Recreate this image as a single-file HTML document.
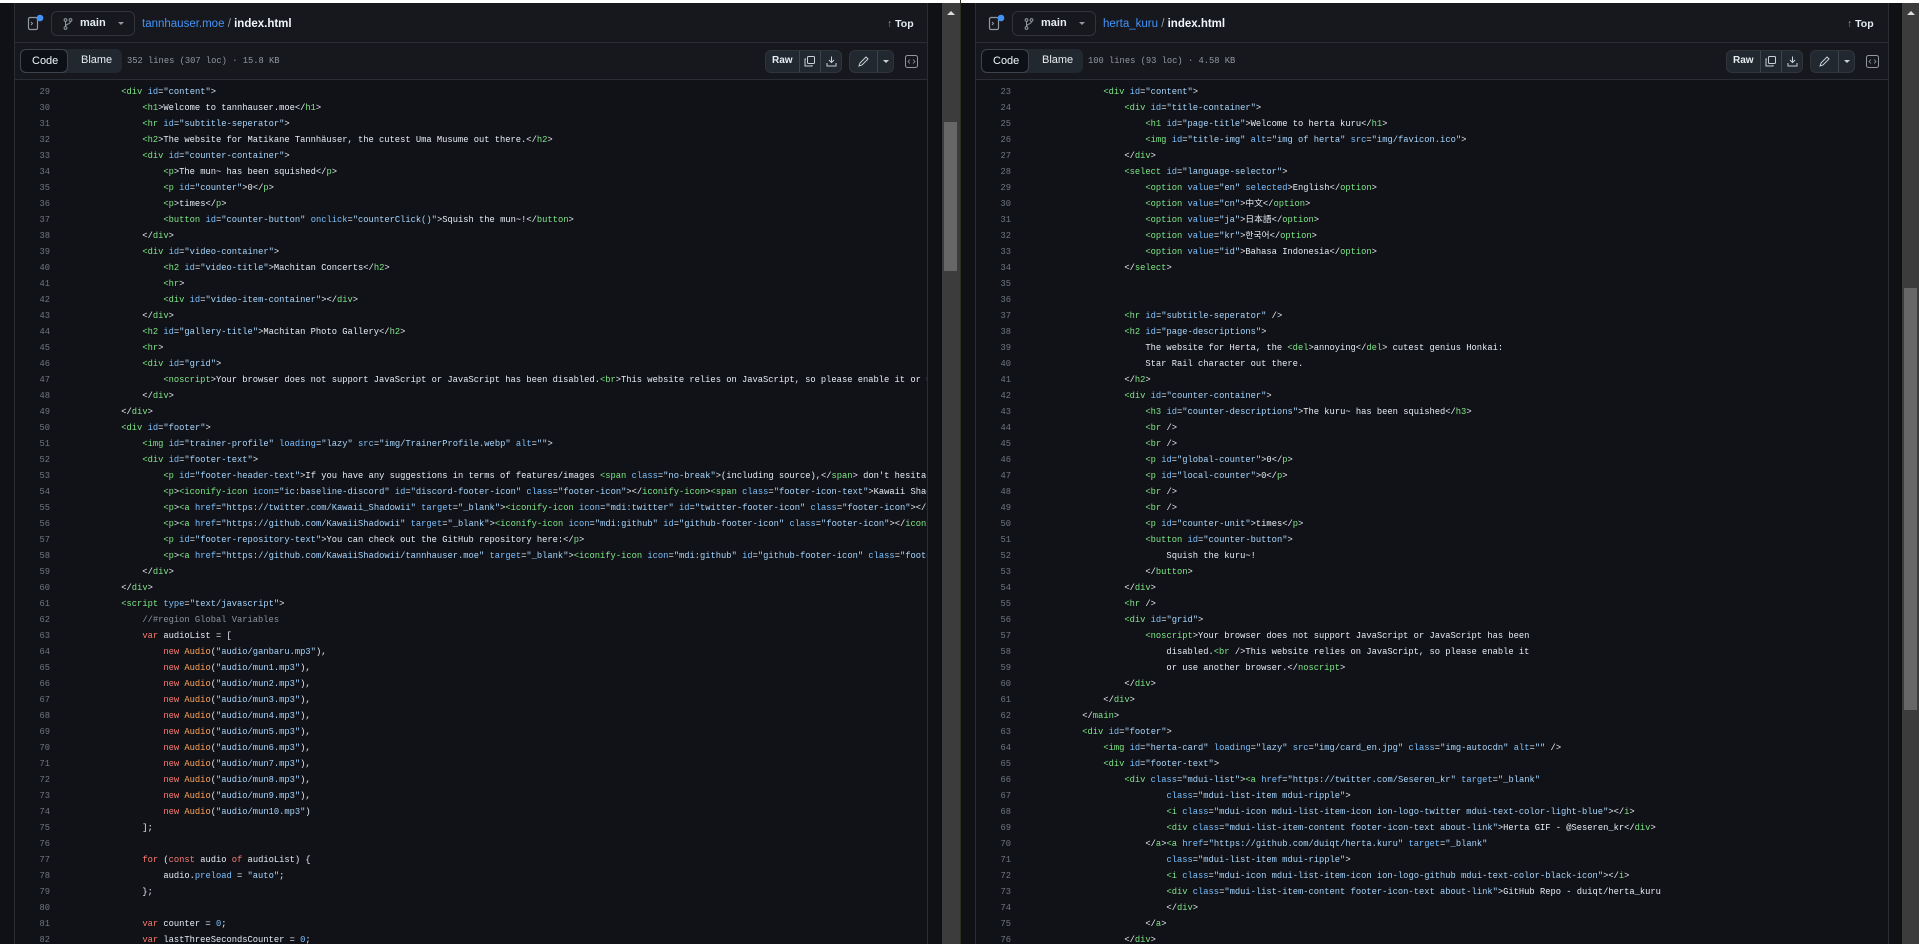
<!DOCTYPE html>
<html><head><meta charset="utf-8">
<style>
*{box-sizing:border-box;margin:0;padding:0}
body{width:1919px;height:944px;background:#101115;overflow:hidden;position:relative;font-family:"Liberation Sans",sans-serif;color:#e6edf3}
.topstrip{position:absolute;left:0;top:0;width:1919px;height:3px;background:#fff}
.pane{position:absolute;top:3px;width:960px;height:941px;background:#101115;overflow:hidden}
.divider{position:absolute;left:960px;top:0;width:1px;height:944px;background:#2e2f20}
.box{position:absolute;left:14px;top:0;width:914px;height:960px;background:#111217;border-left:1px solid #2a2d33;border-right:1px solid #2a2d33;overflow:hidden}
.hdr{position:absolute;left:0;top:0;width:100%;height:40px;background:#16181d;border-bottom:1px solid #2a2d33}
.tb{position:absolute;left:0;top:40px;width:100%;height:37px;background:#16181d;border-bottom:1px solid #2a2d33}
.sb{position:absolute;left:942px;top:0;width:18px;height:941px;background:#3c3c3c}
.sb .th{position:absolute;left:2px;width:13px;background:#676767}
.sb .ar{position:absolute;left:5px;top:8px;width:0;height:0;border-left:4px solid transparent;border-right:4px solid transparent;border-bottom:4px solid #ddd}
.abs{position:absolute}
.btn{position:absolute;border:1px solid #30343b;border-radius:6px;background:#1b1e24}
.crumb{position:absolute;top:14px;font-size:11.5px;line-height:14px;white-space:nowrap}
.crumb a{color:#4493f8;text-decoration:none}
.crumb b{color:#f0f6fc}
.top{position:absolute;top:15px;font-size:10.5px;font-weight:bold;color:#e6edf3}
.code{position:absolute;left:0;top:80.5px;width:100%;height:900px;font-family:"Liberation Mono","Noto Sans CJK SC",monospace;font-size:8.77px;line-height:16px;color:#e6edf3}
.ln,.src{white-space:pre;position:absolute;top:0}
.ln{left:0;width:35px;text-align:right;color:#6e7681}
.src{left:64.2px}
.t{color:#7ee787}.a{color:#79c0ff}.s{color:#a5d6ff}.k{color:#ff7b72}.f{color:#ffa657}.c{color:#8b949e}.n{color:#79c0ff}
.stat{position:absolute;left:112px;top:13px;font-family:"Liberation Mono",monospace;font-size:8.77px;color:#9198a1}
</style></head><body>
<div class="topstrip"></div>

<!-- LEFT PANE -->
<div class="pane" style="left:0">
 <div class="box">
  <div class="hdr">
   <svg class="abs" style="left:12px;top:11px" width="18" height="18" viewBox="0 0 18 18"><rect x="1.5" y="3.5" width="9" height="12" rx="1.5" fill="none" stroke="#9198a1" stroke-width="1.2"/><path d="M4 8l1.5 1.5L4 11" stroke="#9198a1" fill="none" stroke-width="1"/><circle cx="13" cy="4" r="3.3" fill="#4493f8"/></svg>
   <div class="btn" style="left:36px;top:8px;width:84px;height:25px;background:#16181d">
    <svg class="abs" style="left:11px;top:6px" width="10" height="12" viewBox="0 0 10 12"><circle cx="2.5" cy="2" r="1.4" fill="none" stroke="#9198a1"/><circle cx="7.5" cy="2" r="1.4" fill="none" stroke="#9198a1"/><circle cx="2.5" cy="10" r="1.4" fill="none" stroke="#9198a1"/><path d="M2.5 3.5v5M7.5 3.5c0 3-5 2-5 5" fill="none" stroke="#9198a1"/></svg>
    <span class="abs" style="left:28px;top:5px;font-size:11px;font-weight:bold;color:#e6edf3">main</span>
    <span class="abs" style="left:66px;top:10px;border-left:3px solid transparent;border-right:3px solid transparent;border-top:3px solid #9198a1"></span>
   </div>
   <div class="crumb" style="left:127px"><a>tannhauser.moe</a> <span style="color:#9198a1">/</span> <b>index.html</b></div>
   <div class="top" style="left:872px"><span style="color:#9198a1;font-weight:normal">↑</span> Top</div>
  </div>
  <div class="tb">
   <div class="btn" style="left:5px;top:6px;width:102px;height:24px;background:#212830;border-color:#212830"></div>
   <div class="btn" style="left:5px;top:6px;width:48px;height:24px;background:#0d1117;border-color:#3d444d"><span class="abs" style="left:11px;top:5px;font-size:11px;color:#f0f6fc">Code</span></div>
   <span class="abs" style="left:66px;top:11px;font-size:11px;color:#e6edf3">Blame</span>
   <div class="stat">352 lines (307 loc) · 15.8 KB</div>
   <div class="btn" style="left:750px;top:7px;width:77px;height:23px;background:#212830">
    <span class="abs" style="left:6px;top:4px;font-size:10px;font-weight:bold">Raw</span>
    <div class="abs" style="left:33px;top:0;width:1px;height:21px;background:#3d444d"></div>
    <svg class="abs" style="left:38px;top:5px" width="11" height="11" viewBox="0 0 11 11"><rect x="3.5" y="0.5" width="7" height="7" rx="1" fill="none" stroke="#c9d1d9"/><path d="M2 3H1v7h7V9" fill="none" stroke="#c9d1d9"/></svg>
    <div class="abs" style="left:54px;top:0;width:1px;height:21px;background:#3d444d"></div>
    <svg class="abs" style="left:60px;top:5px" width="11" height="11" viewBox="0 0 11 11"><path d="M5.5 0.5v6M3 4l2.5 2.5L8 4M1 7v3h9V7" fill="none" stroke="#c9d1d9"/></svg>
   </div>
   <div class="btn" style="left:834px;top:7px;width:45px;height:23px;background:#212830">
    <svg class="abs" style="left:8px;top:5px" width="11" height="11" viewBox="0 0 11 11"><path d="M1 10l1-3 6-6 2 2-6 6z" fill="none" stroke="#c9d1d9"/></svg>
    <div class="abs" style="left:27px;top:0;width:1px;height:21px;background:#3d444d"></div>
    <span class="abs" style="left:33px;top:9px;border-left:3px solid transparent;border-right:3px solid transparent;border-top:3px solid #c9d1d9"></span>
   </div>
   <svg class="abs" style="left:890px;top:12px" width="13" height="13" viewBox="0 0 13 13"><rect x="0.5" y="0.5" width="12" height="12" rx="2" fill="none" stroke="#9198a1"/><path d="M5 4.5L3 6.5l2 2M8 4.5l2 2-2 2" fill="none" stroke="#9198a1" stroke-width=".8"/></svg>
  </div>
  <div class="code"><div class="ln">29
30
31
32
33
34
35
36
37
38
39
40
41
42
43
44
45
46
47
48
49
50
51
52
53
54
55
56
57
58
59
60
61
62
63
64
65
66
67
68
69
70
71
72
73
74
75
76
77
78
79
80
81
82</div><div class="src">        <span class="t">&lt;div</span> <span class="a">id</span>=<span class="s">"content"</span>&gt;
            <span class="t">&lt;h1</span>&gt;Welcome to tannhauser.moe&lt;/<span class="t">h1</span>&gt;
            <span class="t">&lt;hr</span> <span class="a">id</span>=<span class="s">"subtitle-seperator"</span>&gt;
            <span class="t">&lt;h2</span>&gt;The website for Matikane Tannhäuser, the cutest Uma Musume out there.&lt;/<span class="t">h2</span>&gt;
            <span class="t">&lt;div</span> <span class="a">id</span>=<span class="s">"counter-container"</span>&gt;
                <span class="t">&lt;p</span>&gt;The mun~ has been squished&lt;/<span class="t">p</span>&gt;
                <span class="t">&lt;p</span> <span class="a">id</span>=<span class="s">"counter"</span>&gt;0&lt;/<span class="t">p</span>&gt;
                <span class="t">&lt;p</span>&gt;times&lt;/<span class="t">p</span>&gt;
                <span class="t">&lt;button</span> <span class="a">id</span>=<span class="s">"counter-button"</span> <span class="a">onclick</span>=<span class="s">"counterClick()"</span>&gt;Squish the mun~!&lt;/<span class="t">button</span>&gt;
            &lt;/<span class="t">div</span>&gt;
            <span class="t">&lt;div</span> <span class="a">id</span>=<span class="s">"video-container"</span>&gt;
                <span class="t">&lt;h2</span> <span class="a">id</span>=<span class="s">"video-title"</span>&gt;Machitan Concerts&lt;/<span class="t">h2</span>&gt;
                <span class="t">&lt;hr</span>&gt;
                <span class="t">&lt;div</span> <span class="a">id</span>=<span class="s">"video-item-container"</span>&gt;&lt;/<span class="t">div</span>&gt;
            &lt;/<span class="t">div</span>&gt;
            <span class="t">&lt;h2</span> <span class="a">id</span>=<span class="s">"gallery-title"</span>&gt;Machitan Photo Gallery&lt;/<span class="t">h2</span>&gt;
            <span class="t">&lt;hr</span>&gt;
            <span class="t">&lt;div</span> <span class="a">id</span>=<span class="s">"grid"</span>&gt;
                <span class="t">&lt;noscript</span>&gt;Your browser does not support JavaScript or JavaScript has been disabled.<span class="t">&lt;br</span>&gt;This website relies on JavaScript, so please enable it or use another browser.
            &lt;/<span class="t">div</span>&gt;
        &lt;/<span class="t">div</span>&gt;
        <span class="t">&lt;div</span> <span class="a">id</span>=<span class="s">"footer"</span>&gt;
            <span class="t">&lt;img</span> <span class="a">id</span>=<span class="s">"trainer-profile"</span> <span class="a">loading</span>=<span class="s">"lazy"</span> <span class="a">src</span>=<span class="s">"img/TrainerProfile.webp"</span> <span class="a">alt</span>=<span class="s">""</span>&gt;
            <span class="t">&lt;div</span> <span class="a">id</span>=<span class="s">"footer-text"</span>&gt;
                <span class="t">&lt;p</span> <span class="a">id</span>=<span class="s">"footer-header-text"</span>&gt;If you have any suggestions in terms of features/images <span class="t">&lt;span</span> <span class="a">class</span>=<span class="s">"no-break"</span>&gt;(including source),&lt;/<span class="t">span</span>&gt; don't hesitate to contact me
                <span class="t">&lt;p</span>&gt;<span class="t">&lt;iconify-icon</span> <span class="a">icon</span>=<span class="s">"ic:baseline-discord"</span> <span class="a">id</span>=<span class="s">"discord-footer-icon"</span> <span class="a">class</span>=<span class="s">"footer-icon"</span>&gt;&lt;/<span class="t">iconify-icon</span>&gt;<span class="t">&lt;span</span> <span class="a">class</span>=<span class="s">"footer-icon-text"</span>&gt;Kawaii Shadowii
                <span class="t">&lt;p</span>&gt;<span class="t">&lt;a</span> <span class="a">href</span>=<span class="s">"https://twitter.com/Kawaii_Shadowii"</span> <span class="a">target</span>=<span class="s">"_blank"</span>&gt;<span class="t">&lt;iconify-icon</span> <span class="a">icon</span>=<span class="s">"mdi:twitter"</span> <span class="a">id</span>=<span class="s">"twitter-footer-icon"</span> <span class="a">class</span>=<span class="s">"footer-icon"</span>&gt;&lt;/<span class="t">iconify-icon</span>&gt;
                <span class="t">&lt;p</span>&gt;<span class="t">&lt;a</span> <span class="a">href</span>=<span class="s">"https://github.com/KawaiiShadowii"</span> <span class="a">target</span>=<span class="s">"_blank"</span>&gt;<span class="t">&lt;iconify-icon</span> <span class="a">icon</span>=<span class="s">"mdi:github"</span> <span class="a">id</span>=<span class="s">"github-footer-icon"</span> <span class="a">class</span>=<span class="s">"footer-icon"</span>&gt;&lt;/<span class="t">iconify-icon</span>&gt;
                <span class="t">&lt;p</span> <span class="a">id</span>=<span class="s">"footer-repository-text"</span>&gt;You can check out the GitHub repository here:&lt;/<span class="t">p</span>&gt;
                <span class="t">&lt;p</span>&gt;<span class="t">&lt;a</span> <span class="a">href</span>=<span class="s">"https://github.com/KawaiiShadowii/tannhauser.moe"</span> <span class="a">target</span>=<span class="s">"_blank"</span>&gt;<span class="t">&lt;iconify-icon</span> <span class="a">icon</span>=<span class="s">"mdi:github"</span> <span class="a">id</span>=<span class="s">"github-footer-icon"</span> <span class="a">class</span>=<span class="s">"footer-icon"</span>&gt;
            &lt;/<span class="t">div</span>&gt;
        &lt;/<span class="t">div</span>&gt;
        <span class="t">&lt;script</span> <span class="a">type</span>=<span class="s">"text/javascript"</span>&gt;
            <span class="c">//#region Global Variables</span>
            <span class="k">var</span> audioList = [
                <span class="k">new</span> <span class="f">Audio</span>(<span class="s">"audio/ganbaru.mp3"</span>),
                <span class="k">new</span> <span class="f">Audio</span>(<span class="s">"audio/mun1.mp3"</span>),
                <span class="k">new</span> <span class="f">Audio</span>(<span class="s">"audio/mun2.mp3"</span>),
                <span class="k">new</span> <span class="f">Audio</span>(<span class="s">"audio/mun3.mp3"</span>),
                <span class="k">new</span> <span class="f">Audio</span>(<span class="s">"audio/mun4.mp3"</span>),
                <span class="k">new</span> <span class="f">Audio</span>(<span class="s">"audio/mun5.mp3"</span>),
                <span class="k">new</span> <span class="f">Audio</span>(<span class="s">"audio/mun6.mp3"</span>),
                <span class="k">new</span> <span class="f">Audio</span>(<span class="s">"audio/mun7.mp3"</span>),
                <span class="k">new</span> <span class="f">Audio</span>(<span class="s">"audio/mun8.mp3"</span>),
                <span class="k">new</span> <span class="f">Audio</span>(<span class="s">"audio/mun9.mp3"</span>),
                <span class="k">new</span> <span class="f">Audio</span>(<span class="s">"audio/mun10.mp3"</span>)
            ];

            <span class="k">for</span> (<span class="k">const</span> audio <span class="k">of</span> audioList) {
                audio.<span class="a">preload</span> = <span class="s">"auto"</span>;
            };

            <span class="k">var</span> counter = <span class="n">0</span>;
            <span class="k">var</span> lastThreeSecondsCounter = <span class="n">0</span>;</div></div>
 </div>
 <div class="sb"><div class="ar"></div><div class="th" style="top:119px;height:149px"></div></div>
</div>

<div class="divider"></div>

<!-- RIGHT PANE -->
<div class="pane" style="left:961px;width:958px">
 <div class="box">
  <div class="hdr">
   <svg class="abs" style="left:12px;top:11px" width="18" height="18" viewBox="0 0 18 18"><rect x="1.5" y="3.5" width="9" height="12" rx="1.5" fill="none" stroke="#9198a1" stroke-width="1.2"/><path d="M4 8l1.5 1.5L4 11" stroke="#9198a1" fill="none" stroke-width="1"/><circle cx="13" cy="4" r="3.3" fill="#4493f8"/></svg>
   <div class="btn" style="left:36px;top:8px;width:84px;height:25px;background:#16181d">
    <svg class="abs" style="left:11px;top:6px" width="10" height="12" viewBox="0 0 10 12"><circle cx="2.5" cy="2" r="1.4" fill="none" stroke="#9198a1"/><circle cx="7.5" cy="2" r="1.4" fill="none" stroke="#9198a1"/><circle cx="2.5" cy="10" r="1.4" fill="none" stroke="#9198a1"/><path d="M2.5 3.5v5M7.5 3.5c0 3-5 2-5 5" fill="none" stroke="#9198a1"/></svg>
    <span class="abs" style="left:28px;top:5px;font-size:11px;font-weight:bold;color:#e6edf3">main</span>
    <span class="abs" style="left:66px;top:10px;border-left:3px solid transparent;border-right:3px solid transparent;border-top:3px solid #9198a1"></span>
   </div>
   <div class="crumb" style="left:127px"><a>herta_kuru</a> <span style="color:#9198a1">/</span> <b>index.html</b></div>
   <div class="top" style="left:871px"><span style="color:#9198a1;font-weight:normal">↑</span> Top</div>
  </div>
  <div class="tb">
   <div class="btn" style="left:5px;top:6px;width:102px;height:24px;background:#212830;border-color:#212830"></div>
   <div class="btn" style="left:5px;top:6px;width:48px;height:24px;background:#0d1117;border-color:#3d444d"><span class="abs" style="left:11px;top:5px;font-size:11px;color:#f0f6fc">Code</span></div>
   <span class="abs" style="left:66px;top:11px;font-size:11px;color:#e6edf3">Blame</span>
   <div class="stat">100 lines (93 loc) · 4.58 KB</div>
   <div class="btn" style="left:750px;top:7px;width:77px;height:23px;background:#212830">
    <span class="abs" style="left:6px;top:4px;font-size:10px;font-weight:bold">Raw</span>
    <div class="abs" style="left:33px;top:0;width:1px;height:21px;background:#3d444d"></div>
    <svg class="abs" style="left:38px;top:5px" width="11" height="11" viewBox="0 0 11 11"><rect x="3.5" y="0.5" width="7" height="7" rx="1" fill="none" stroke="#c9d1d9"/><path d="M2 3H1v7h7V9" fill="none" stroke="#c9d1d9"/></svg>
    <div class="abs" style="left:54px;top:0;width:1px;height:21px;background:#3d444d"></div>
    <svg class="abs" style="left:60px;top:5px" width="11" height="11" viewBox="0 0 11 11"><path d="M5.5 0.5v6M3 4l2.5 2.5L8 4M1 7v3h9V7" fill="none" stroke="#c9d1d9"/></svg>
   </div>
   <div class="btn" style="left:834px;top:7px;width:45px;height:23px;background:#212830">
    <svg class="abs" style="left:8px;top:5px" width="11" height="11" viewBox="0 0 11 11"><path d="M1 10l1-3 6-6 2 2-6 6z" fill="none" stroke="#c9d1d9"/></svg>
    <div class="abs" style="left:27px;top:0;width:1px;height:21px;background:#3d444d"></div>
    <span class="abs" style="left:33px;top:9px;border-left:3px solid transparent;border-right:3px solid transparent;border-top:3px solid #c9d1d9"></span>
   </div>
   <svg class="abs" style="left:890px;top:12px" width="13" height="13" viewBox="0 0 13 13"><rect x="0.5" y="0.5" width="12" height="12" rx="2" fill="none" stroke="#9198a1"/><path d="M5 4.5L3 6.5l2 2M8 4.5l2 2-2 2" fill="none" stroke="#9198a1" stroke-width=".8"/></svg>
  </div>
  <div class="code"><div class="ln">23
24
25
26
27
28
29
30
31
32
33
34
35
36
37
38
39
40
41
42
43
44
45
46
47
48
49
50
51
52
53
54
55
56
57
58
59
60
61
62
63
64
65
66
67
68
69
70
71
72
73
74
75
76</div><div class="src">            <span class="t">&lt;div</span> <span class="a">id</span>=<span class="s">"content"</span>&gt;
                <span class="t">&lt;div</span> <span class="a">id</span>=<span class="s">"title-container"</span>&gt;
                    <span class="t">&lt;h1</span> <span class="a">id</span>=<span class="s">"page-title"</span>&gt;Welcome to herta kuru&lt;/<span class="t">h1</span>&gt;
                    <span class="t">&lt;img</span> <span class="a">id</span>=<span class="s">"title-img"</span> <span class="a">alt</span>=<span class="s">"img of herta"</span> <span class="a">src</span>=<span class="s">"img/favicon.ico"</span>&gt;
                &lt;/<span class="t">div</span>&gt;
                <span class="t">&lt;select</span> <span class="a">id</span>=<span class="s">"language-selector"</span>&gt;
                    <span class="t">&lt;option</span> <span class="a">value</span>=<span class="s">"en"</span> <span class="a">selected</span>&gt;English&lt;/<span class="t">option</span>&gt;
                    <span class="t">&lt;option</span> <span class="a">value</span>=<span class="s">"cn"</span>&gt;中文&lt;/<span class="t">option</span>&gt;
                    <span class="t">&lt;option</span> <span class="a">value</span>=<span class="s">"ja"</span>&gt;日本語&lt;/<span class="t">option</span>&gt;
                    <span class="t">&lt;option</span> <span class="a">value</span>=<span class="s">"kr"</span>&gt;한국어&lt;/<span class="t">option</span>&gt;
                    <span class="t">&lt;option</span> <span class="a">value</span>=<span class="s">"id"</span>&gt;Bahasa Indonesia&lt;/<span class="t">option</span>&gt;
                &lt;/<span class="t">select</span>&gt;


                <span class="t">&lt;hr</span> <span class="a">id</span>=<span class="s">"subtitle-seperator"</span> /&gt;
                <span class="t">&lt;h2</span> <span class="a">id</span>=<span class="s">"page-descriptions"</span>&gt;
                    The website for Herta, the <span class="t">&lt;del</span>&gt;annoying&lt;/<span class="t">del</span>&gt; cutest genius Honkai:
                    Star Rail character out there.
                &lt;/<span class="t">h2</span>&gt;
                <span class="t">&lt;div</span> <span class="a">id</span>=<span class="s">"counter-container"</span>&gt;
                    <span class="t">&lt;h3</span> <span class="a">id</span>=<span class="s">"counter-descriptions"</span>&gt;The kuru~ has been squished&lt;/<span class="t">h3</span>&gt;
                    <span class="t">&lt;br</span> /&gt;
                    <span class="t">&lt;br</span> /&gt;
                    <span class="t">&lt;p</span> <span class="a">id</span>=<span class="s">"global-counter"</span>&gt;0&lt;/<span class="t">p</span>&gt;
                    <span class="t">&lt;p</span> <span class="a">id</span>=<span class="s">"local-counter"</span>&gt;0&lt;/<span class="t">p</span>&gt;
                    <span class="t">&lt;br</span> /&gt;
                    <span class="t">&lt;br</span> /&gt;
                    <span class="t">&lt;p</span> <span class="a">id</span>=<span class="s">"counter-unit"</span>&gt;times&lt;/<span class="t">p</span>&gt;
                    <span class="t">&lt;button</span> <span class="a">id</span>=<span class="s">"counter-button"</span>&gt;
                        Squish the kuru~!
                    &lt;/<span class="t">button</span>&gt;
                &lt;/<span class="t">div</span>&gt;
                <span class="t">&lt;hr</span> /&gt;
                <span class="t">&lt;div</span> <span class="a">id</span>=<span class="s">"grid"</span>&gt;
                    <span class="t">&lt;noscript</span>&gt;Your browser does not support JavaScript or JavaScript has been
                        disabled.<span class="t">&lt;br</span> /&gt;This website relies on JavaScript, so please enable it
                        or use another browser.&lt;/<span class="t">noscript</span>&gt;
                &lt;/<span class="t">div</span>&gt;
            &lt;/<span class="t">div</span>&gt;
        &lt;/<span class="t">main</span>&gt;
        <span class="t">&lt;div</span> <span class="a">id</span>=<span class="s">"footer"</span>&gt;
            <span class="t">&lt;img</span> <span class="a">id</span>=<span class="s">"herta-card"</span> <span class="a">loading</span>=<span class="s">"lazy"</span> <span class="a">src</span>=<span class="s">"img/card_en.jpg"</span> <span class="a">class</span>=<span class="s">"img-autocdn"</span> <span class="a">alt</span>=<span class="s">""</span> /&gt;
            <span class="t">&lt;div</span> <span class="a">id</span>=<span class="s">"footer-text"</span>&gt;
                <span class="t">&lt;div</span> <span class="a">class</span>=<span class="s">"mdui-list"</span>&gt;<span class="t">&lt;a</span> <span class="a">href</span>=<span class="s">"https://twitter.com/Seseren_kr"</span> <span class="a">target</span>=<span class="s">"_blank"</span>
                        <span class="a">class</span>=<span class="s">"mdui-list-item mdui-ripple"</span>&gt;
                        <span class="t">&lt;i</span> <span class="a">class</span>=<span class="s">"mdui-icon mdui-list-item-icon ion-logo-twitter mdui-text-color-light-blue"</span>&gt;&lt;/<span class="t">i</span>&gt;
                        <span class="t">&lt;div</span> <span class="a">class</span>=<span class="s">"mdui-list-item-content footer-icon-text about-link"</span>&gt;Herta GIF - @Seseren_kr&lt;/<span class="t">div</span>&gt;
                    &lt;/<span class="t">a</span>&gt;<span class="t">&lt;a</span> <span class="a">href</span>=<span class="s">"https://github.com/duiqt/herta.kuru"</span> <span class="a">target</span>=<span class="s">"_blank"</span>
                        <span class="a">class</span>=<span class="s">"mdui-list-item mdui-ripple"</span>&gt;
                        <span class="t">&lt;i</span> <span class="a">class</span>=<span class="s">"mdui-icon mdui-list-item-icon ion-logo-github mdui-text-color-black-icon"</span>&gt;&lt;/<span class="t">i</span>&gt;
                        <span class="t">&lt;div</span> <span class="a">class</span>=<span class="s">"mdui-list-item-content footer-icon-text about-link"</span>&gt;GitHub Repo - duiqt/herta_kuru
                        &lt;/<span class="t">div</span>&gt;
                    &lt;/<span class="t">a</span>&gt;
                &lt;/<span class="t">div</span>&gt;</div></div>
 </div>
 <div class="sb" style="left:941px;width:17px"><div class="ar"></div><div class="th" style="top:285px;height:422px"></div></div>
</div>
</body></html>
